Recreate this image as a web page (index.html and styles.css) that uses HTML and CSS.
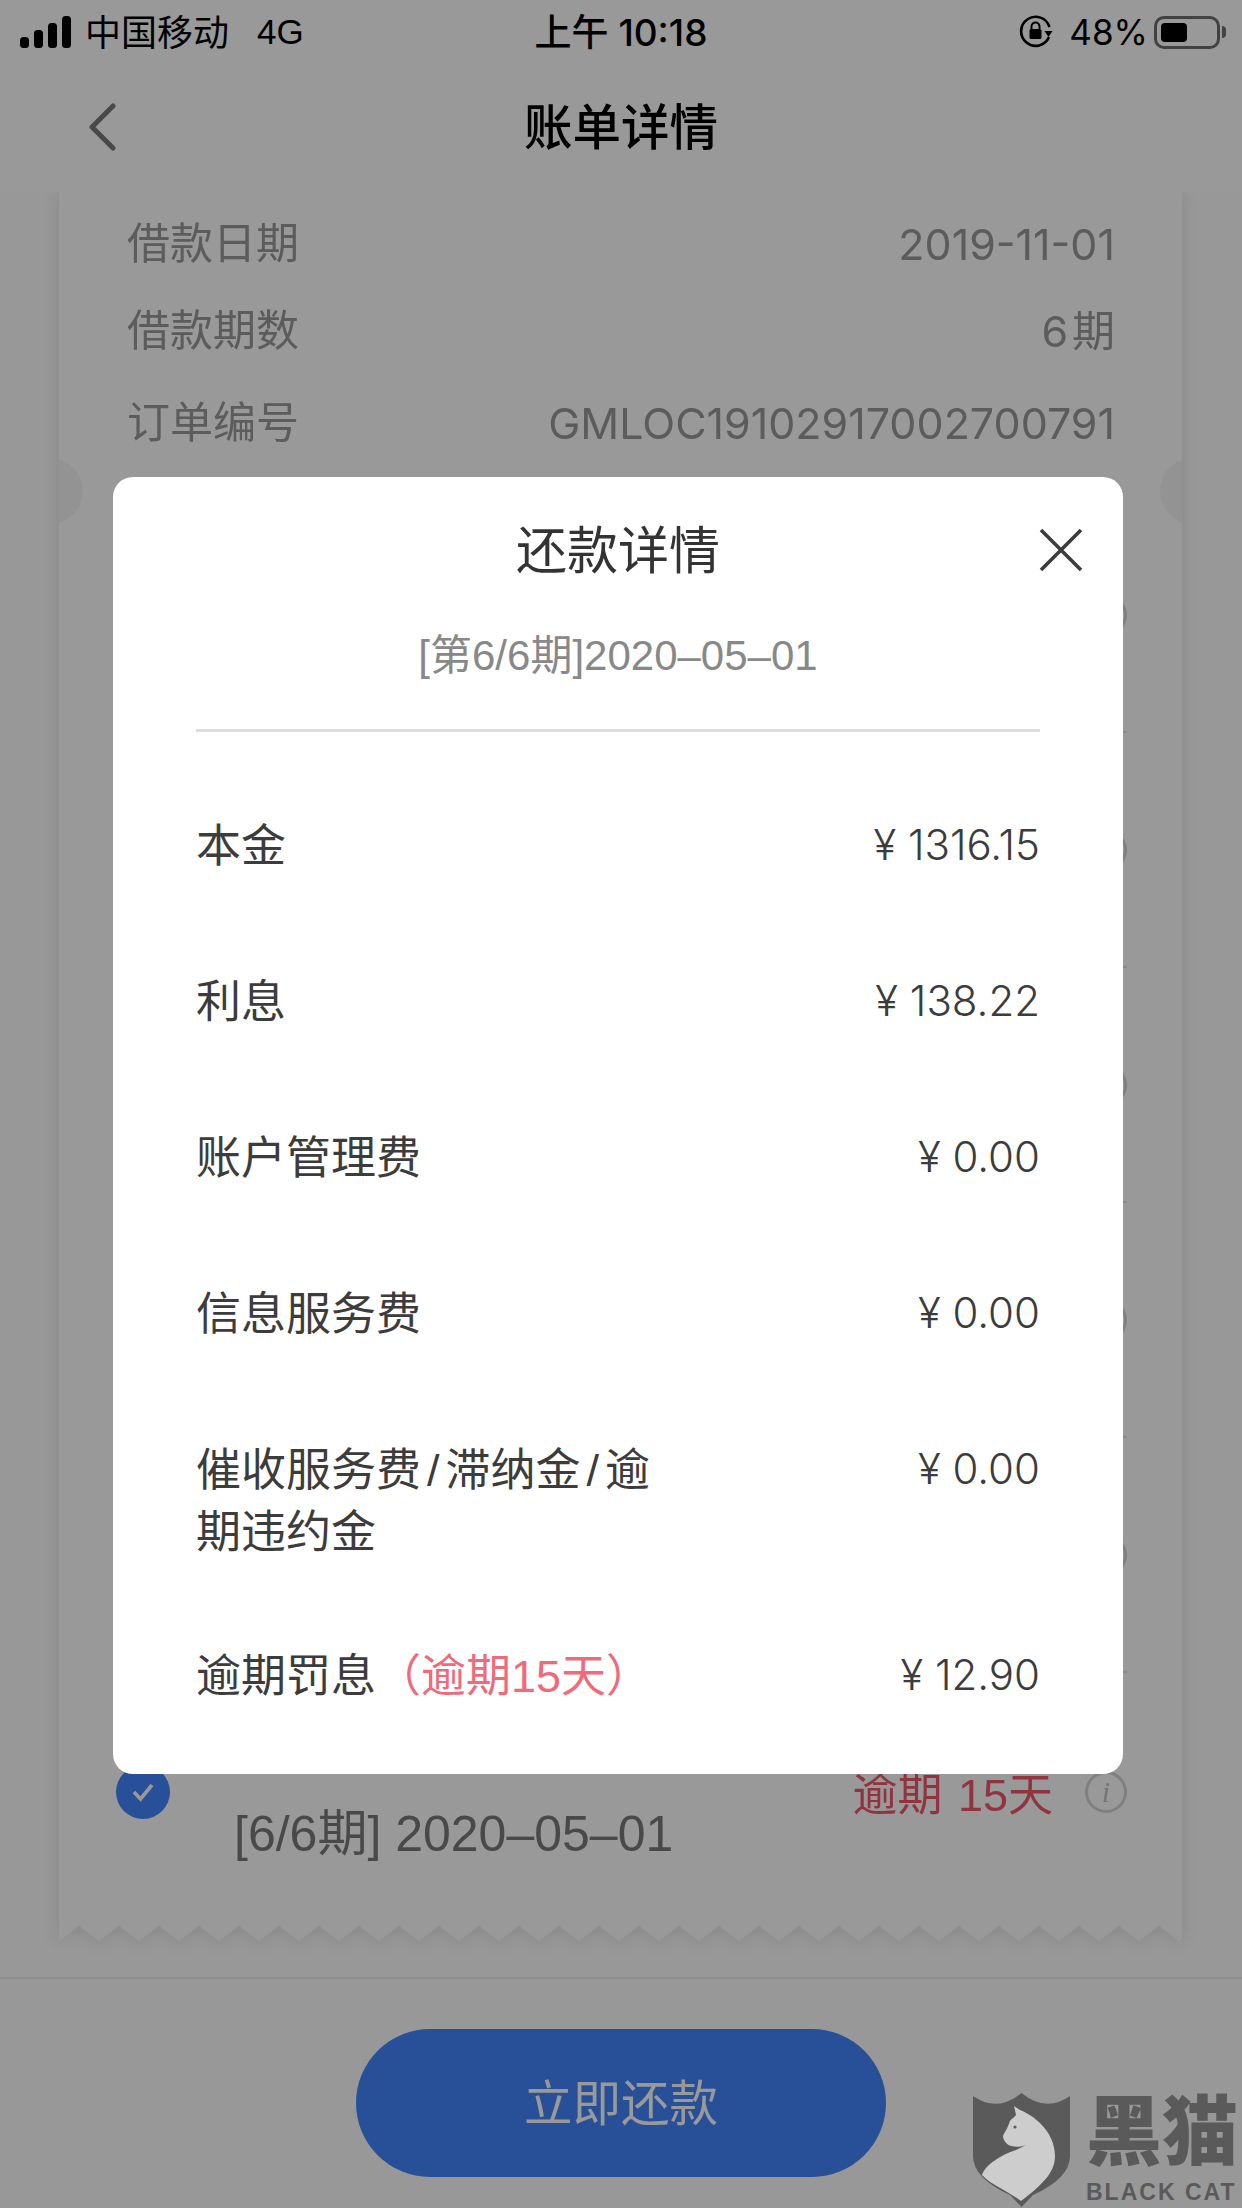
FILE: index.html
```html
<!DOCTYPE html>
<html lang="zh-CN">
<head>
    <meta charset="UTF-8">
    <title>账单详情</title>
    <link rel="stylesheet" href="styles.css">
</head>
<body>
    <div class="page">
        <div class="status-bar">
            <div class="status-left">
                <svg class="signal" width="52" height="32" viewBox="0 0 52 32">
                    <rect x="0" y="21" width="9" height="11" rx="3.5"/>
                    <rect x="14" y="14" width="9" height="18" rx="3.5"/>
                    <rect x="28" y="7" width="9" height="25" rx="3.5"/>
                    <rect x="42" y="0" width="9" height="32" rx="3.5"/>
                </svg>
                <span class="carrier">中国移动</span>
                <span class="network">4G</span>
            </div>
            <div class="status-time">上午 10:18</div>
            <div class="status-right">
                <svg class="rotate-lock" width="34" height="34" viewBox="0 0 34 34">
                    <path d="M30 22 A14.5 14.5 0 1 1 30.5 12" fill="none" stroke="#000" stroke-width="2.6"/>
                    <path d="M25.5 16 L33.5 16 L29.5 22 Z" fill="#000"/>
                    <path d="M12.5 14 V11.5 A4 4 0 0 1 20.5 11.5 V14" fill="none" stroke="#000" stroke-width="2"/>
                    <rect x="10.5" y="14" width="12" height="10" rx="1.5" fill="#000"/>
                </svg>
                <span class="battery-pct">48%</span>
                <div class="battery">
                    <div class="battery-level"></div>
                </div>
                <div class="battery-nib"></div>
            </div>
        </div>

        <div class="nav-bar">
            <svg class="back" width="32" height="48" viewBox="0 0 32 48">
                <path d="M27 3 L6 24 L27 45" fill="none" stroke="#7b7b7b" stroke-width="5" stroke-linecap="round" stroke-linejoin="round"/>
            </svg>
            <div class="nav-title">账单详情</div>
        </div>

        <div class="content">
            <div class="bill-card">
                <div class="bill-sheet">
                    <div class="notch notch-left"></div>
                    <div class="notch notch-right"></div>

                    <div class="info-list">
                        <div class="info-row"><span>借款日期</span><span class="info-value">2019-11-01</span></div>
                        <div class="info-row"><span>借款期数</span><span class="info-value">6&#8202;期</span></div>
                        <div class="info-row"><span>订单编号</span><span class="info-value">GMLOC19102917002700791</span></div>
                    </div>

                    <div class="bill-list">
                        <div class="bill-row"><span class="info-icon">i</span></div>
                        <div class="bill-row"><span class="info-icon">i</span></div>
                        <div class="bill-row"><span class="info-icon">i</span></div>
                        <div class="bill-row"><span class="info-icon">i</span></div>
                        <div class="bill-row"><span class="info-icon">i</span></div>
                        <div class="bill-row-last">
                            <span class="check">
                                <svg width="28" height="24" viewBox="0 0 28 24">
                                    <path d="M5 12 L11.5 19 L23 5" fill="none" stroke="#fff" stroke-width="3.6"/>
                                </svg>
                            </span>
                            <span class="overdue">逾期 15天</span>
                            <span class="info-icon">i</span>
                            <div class="bill-date">[6/6期] 2020–05–01</div>
                        </div>
                    </div>
                </div>
                <div class="zigzag"></div>
            </div>
        </div>

        <div class="footer">
            <button class="pay-button">立即还款</button>
        </div>

        <div class="overlay">
            <div class="modal">
                <div class="modal-head">
                    <span></span>
                    <div class="modal-title">还款详情</div>
                    <svg class="close" width="44" height="44" viewBox="0 0 44 44">
                        <path d="M2 2 L42 42 M42 2 L2 42" fill="none" stroke="#3c3c3c" stroke-width="3.6"/>
                    </svg>
                </div>
                <div class="modal-sub">[第6/6期]2020–05–01</div>
                <div class="modal-line"></div>
                <div class="fee-list">
                    <div class="fee-row"><span class="fee-name">本金</span><span class="fee-amount">¥ 1316.15</span></div>
                    <div class="fee-row"><span class="fee-name">利息</span><span class="fee-amount">¥ 138.22</span></div>
                    <div class="fee-row"><span class="fee-name">账户管理费</span><span class="fee-amount">¥ 0.00</span></div>
                    <div class="fee-row"><span class="fee-name">信息服务费</span><span class="fee-amount">¥ 0.00</span></div>
                    <div class="fee-row fee-row-tall"><span class="fee-name">催收服务费<i class="slash">/</i>滞纳金<i class="slash">/</i>逾<br>期违约金</span><span class="fee-amount">¥ 0.00</span></div>
                    <div class="fee-row"><span class="fee-name">逾期罚息<em class="fee-late">（逾期15天）</em></span><span class="fee-amount">¥ 12.90</span></div>
                </div>
            </div>
        </div>

        <div class="watermark">
            <svg class="shield" width="98" height="115" viewBox="0 0 98 115">
                <path d="M0 3 Q24 20 48.5 0 Q73 20 97 3 L97 63 Q97 85 60 102 L48.5 114 L37 102 Q0 85 0 63 Z" fill="#5a5a5a"/>
                <path d="M41 13 L47 17 C60 22 82 38 82 63 C82 78 72 90 48 108 C35 98 18 92 9 82 C12 72 28 62 43 57 L53 52 C46 55 38 54 34 51 C31 48 30 45 30 43 C31 40 34 37 37 28 C38 26 42 24 43 22 Z" fill="#cdcdcd"/>
                <circle cx="42" cy="34" r="1.6" fill="#5a5a5a"/>
            </svg>
            <div class="mark-text">
                <div class="mark-cn">黑猫</div>
                <div class="mark-en">BLACK CAT</div>
            </div>
        </div>
    </div>
</body>
</html>
```

FILE: styles.css
```css
* {
    box-sizing: border-box;
}
body {
    margin: 0;
    font-family: "Liberation Sans", "Noto Sans CJK SC", sans-serif;
    background-color: #fff;
}
.page {
    position: relative;
    width: 1242px;
    height: 2208px;
    overflow: hidden;
    display: flex;
    flex-direction: column;
    background-color: #fff;
}

/* status bar */
.status-bar {
    height: 64px;
    flex: none;
    display: grid;
    grid-template-columns: 1fr auto 1fr;
    align-items: center;
    padding: 0 16px 0 20px;
    color: #000;
    font-size: 35px;
}
.status-left {
    display: flex;
    align-items: center;
}
.signal {
    margin-right: 13px;
}
.carrier {
    font-size: 36px;
    margin-bottom: 4px;
}
.network {
    margin-left: 28px;
}
.status-time {
    margin: 0 4px 4px 0;
    font-size: 37px;
    font-weight: 500;
    font-family: "Inter", "Noto Sans CJK SC", sans-serif;
}
.status-right {
    display: flex;
    align-items: center;
    justify-content: flex-end;
}
.battery-pct {
    margin: 0 6px 0 16px;
    font-family: "Inter", sans-serif;
    font-size: 35px;
}
.battery {
    width: 66px;
    height: 33px;
    padding: 4px;
    border: 3px solid #6e6e6e;
    border-radius: 10px;
}
.battery-level {
    width: 26px;
    height: 100%;
    background-color: #000;
    border-radius: 4px;
}
.battery-nib {
    width: 4px;
    height: 12px;
    margin-left: 2px;
    background-color: #6e6e6e;
    border-radius: 0 4px 4px 0;
}

/* nav */
.nav-bar {
    height: 128px;
    flex: none;
    position: relative;
    z-index: 2;
    display: flex;
    align-items: center;
    justify-content: center;
    background-color: #fff;
    padding-bottom: 8px;
}
.back {
    position: absolute;
    left: 86px;
    top: 39px;
}
.nav-title {
    font-size: 48.5px;
    font-weight: 500;
    color: #000;
}

/* bill card */
.content {
    flex: 1;
    min-height: 0;
    overflow: hidden;
    padding: 0 60px 0 59px;
    background-color: #fdfdfd;
}
.bill-card {
    filter: drop-shadow(0 1px 9px rgba(0, 0, 0, 0.11));
}
.bill-sheet {
    position: relative;
    height: 1720px;
    overflow: hidden;
    background-color: #fff;
}
.notch {
    position: absolute;
    top: 267px;
    width: 60px;
    height: 64px;
    border-radius: 50%;
    background-color: #f6f6f6;
}
.notch-left {
    left: -36px;
}
.notch-right {
    right: -38px;
}
.info-list {
    padding: 21px 67px 0 68px;
    height: 306px;
    font-size: 43px;
    color: #9a9a9a;
}
.info-row {
    display: flex;
    justify-content: space-between;
    line-height: 62px;
    margin-bottom: 25px;
}
.info-row:nth-child(2) {
    margin-bottom: 30px;
}
.info-value {
    font-family: "Inter", "Noto Sans CJK SC", sans-serif;
    font-size: 43px;
}
.bill-row {
    height: 235px;
    margin: 0 55px 0 118px;
    display: flex;
    align-items: center;
    justify-content: flex-end;
    border-bottom: 2px solid #e6e6e6;
}
.bill-row-last {
    display: grid;
    grid-template-columns: 54px 1fr auto 42px;
    align-items: center;
    padding: 86px 55px 0 57px;
}
.info-icon {
    width: 42px;
    height: 42px;
    border: 3px solid #d5d5d5;
    border-radius: 50%;
    color: #c4c4c4;
    font: italic 30px/36px "Liberation Serif", serif;
    text-align: center;
}
.check {
    width: 54px;
    height: 54px;
    border-radius: 50%;
    background-color: #4185ff;
    display: flex;
    align-items: center;
    justify-content: center;
}
.overdue {
    grid-column: 3;
    margin-right: 32px;
    font-size: 45px;
    word-spacing: 3px;
    color: #f3576b;
}
.bill-date {
    grid-column: 1 / -1;
    margin: -21px 0 0 118px;
    font-size: 50px;
    line-height: 62px;
    color: #7b7b7b;
}
/* top half is solid, the notches come from the bottom half of each tile */
.zigzag {
    height: 30px;
    margin-top: -1px;
    background:
        linear-gradient(to bottom right, #fff 50%, transparent 50%) 0 0 / 40px 30px repeat-x,
        linear-gradient(to bottom left, #fff 50%, transparent 50%) 0 0 / 40px 30px repeat-x;
}

/* footer */
.footer {
    height: 231px;
    flex: none;
    display: flex;
    justify-content: center;
    padding-top: 50px;
    border-top: 2px solid #eee;
    background-color: #fdfdfd;
    position: relative;
    z-index: 2;
}
.pay-button {
    width: 530px;
    height: 148px;
    padding: 0 0 6px;
    border: none;
    border-radius: 74px;
    background-color: #4185ff;
    color: #fff;
    font-family: inherit;
    font-size: 48.5px;
}

/* dim layer and dialog */
.overlay {
    position: absolute;
    inset: 0;
    z-index: 3;
    background-color: rgba(0, 0, 0, 0.4);
    padding: 477px 119px 0 113px;
}
.modal {
    height: 1297px;
    padding: 39px 83px 0;
    background-color: #fff;
    border-radius: 20px;
}
.modal-head {
    display: grid;
    grid-template-columns: 1fr auto 1fr;
    align-items: center;
}
.modal-title {
    font-size: 51px;
    line-height: 72px;
    color: #333;
}
.close {
    justify-self: end;
    margin: -5px -43px 0 0;
}
.modal-sub {
    margin-top: 43px;
    font-size: 42px;
    line-height: 50px;
    color: #888;
    text-align: center;
}
.modal-line {
    height: 3px;
    margin-top: 48px;
    background-color: #ddd;
}
.fee-list {
    display: flex;
    flex-direction: column;
    gap: 91px;
    margin-top: 81px;
}
.fee-row {
    display: flex;
    justify-content: space-between;
    align-items: flex-start;
    line-height: 62px;
    color: #3c3c3c;
}
.fee-row-tall {
    margin-bottom: -12px;
}
.fee-name {
    padding-top: 3px;
    font-size: 45px;
}
.slash {
    margin: 0 6px;
    font-style: normal;
}
.fee-amount {
    padding-top: 1px;
    font-family: "Inter", "Noto Sans CJK SC", sans-serif;
    font-size: 42px;
    font-weight: 300;
}
.fee-late {
    font-style: normal;
    color: #ef6a7a;
}

/* watermark */
.watermark {
    position: absolute;
    left: 973px;
    top: 2090px;
    z-index: 4;
    display: flex;
    color: #5a5a5a;
}
.shield {
    margin-top: 3px;
}
.mark-text {
    margin-left: 15px;
}
.mark-cn {
    font-size: 76px;
    line-height: 76px;
    font-weight: 900;
    margin-top: 5px;
}
.mark-en {
    margin-top: 9px;
    font-size: 23px;
    line-height: 24px;
    font-weight: 700;
    letter-spacing: 2px;
}
```
